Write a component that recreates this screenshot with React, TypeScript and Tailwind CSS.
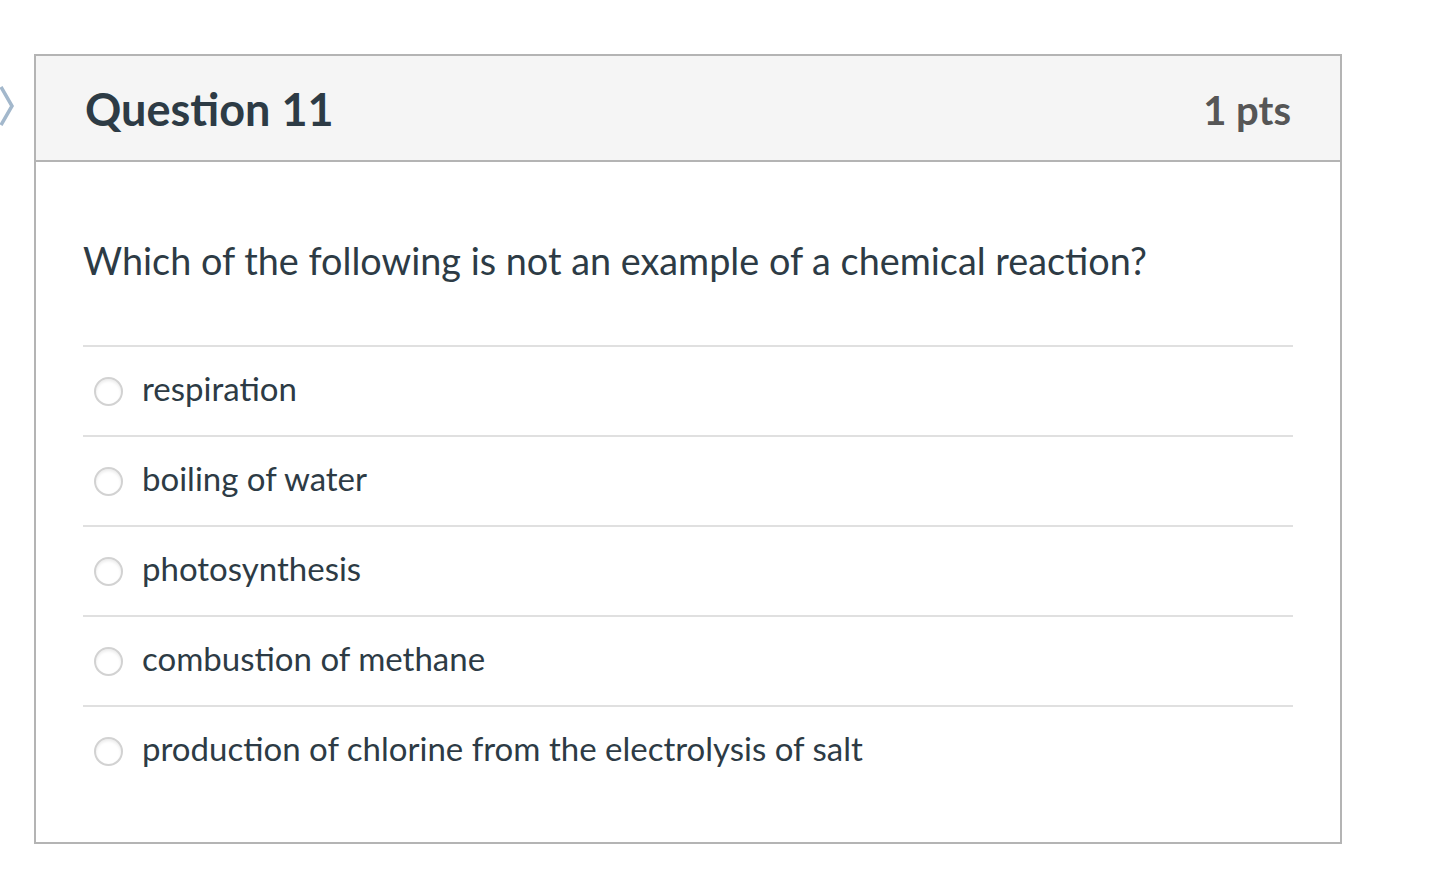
import React from "react";

const options = [
  "respiration",
  "boiling of water",
  "photosynthesis",
  "combustion of methane",
  "production of chlorine from the electrolysis of salt",
];

export default function App() {
  return (
    <div
      className="w-[1434px] h-[896px] bg-white relative"
      style={{ fontFamily: "Lato, 'Noto Sans', sans-serif" }}
    >
      <svg className="absolute left-0 top-[84px]" width="16" height="44" viewBox="0 0 16 44">
        <path d="M1 3 L12 22 L1 41" fill="none" stroke="#a3b8cc" strokeWidth="3.5" />
      </svg>
      <div className="pt-[54px] pl-[34px]">
        <div className="w-[1308px] border-2 border-[#b4b4b4] bg-white">
          <div className="h-[106px] bg-[#f5f5f5] border-b-2 border-[#b4b4b4] flex items-center justify-between pl-[49px] pr-[49px]">
            <div className="text-[45px] font-bold text-[#2d3b45] leading-none pt-[3px]">Question 11</div>
            <div className="text-[40px] font-bold text-[#565656] leading-none pt-[3px]">1 pts</div>
          </div>
          <div className="px-[47px] pt-[75px] pb-[47px]">
            <div className="text-[37.8px] text-[#2d3b45] leading-[48px]">
              Which of the following is not an example of a chemical reaction?
            </div>
            <div className="mt-[60px]">
              {options.map((o) => (
                <div key={o} className="border-t-2 border-[#e0e0e0] h-[90px] flex items-center">
                  <div className="w-[29px] h-[29px] rounded-full border-2 border-[#d2d2d2] bg-white shadow-[inset_0_2px_3px_rgba(0,0,0,0.08)] ml-[11px] mr-[19px]" />
                  <div className="text-[33px] text-[#2d3b45] leading-none pb-[5px]">{o}</div>
                </div>
              ))}
            </div>
          </div>
        </div>
      </div>
    </div>
  );
}
